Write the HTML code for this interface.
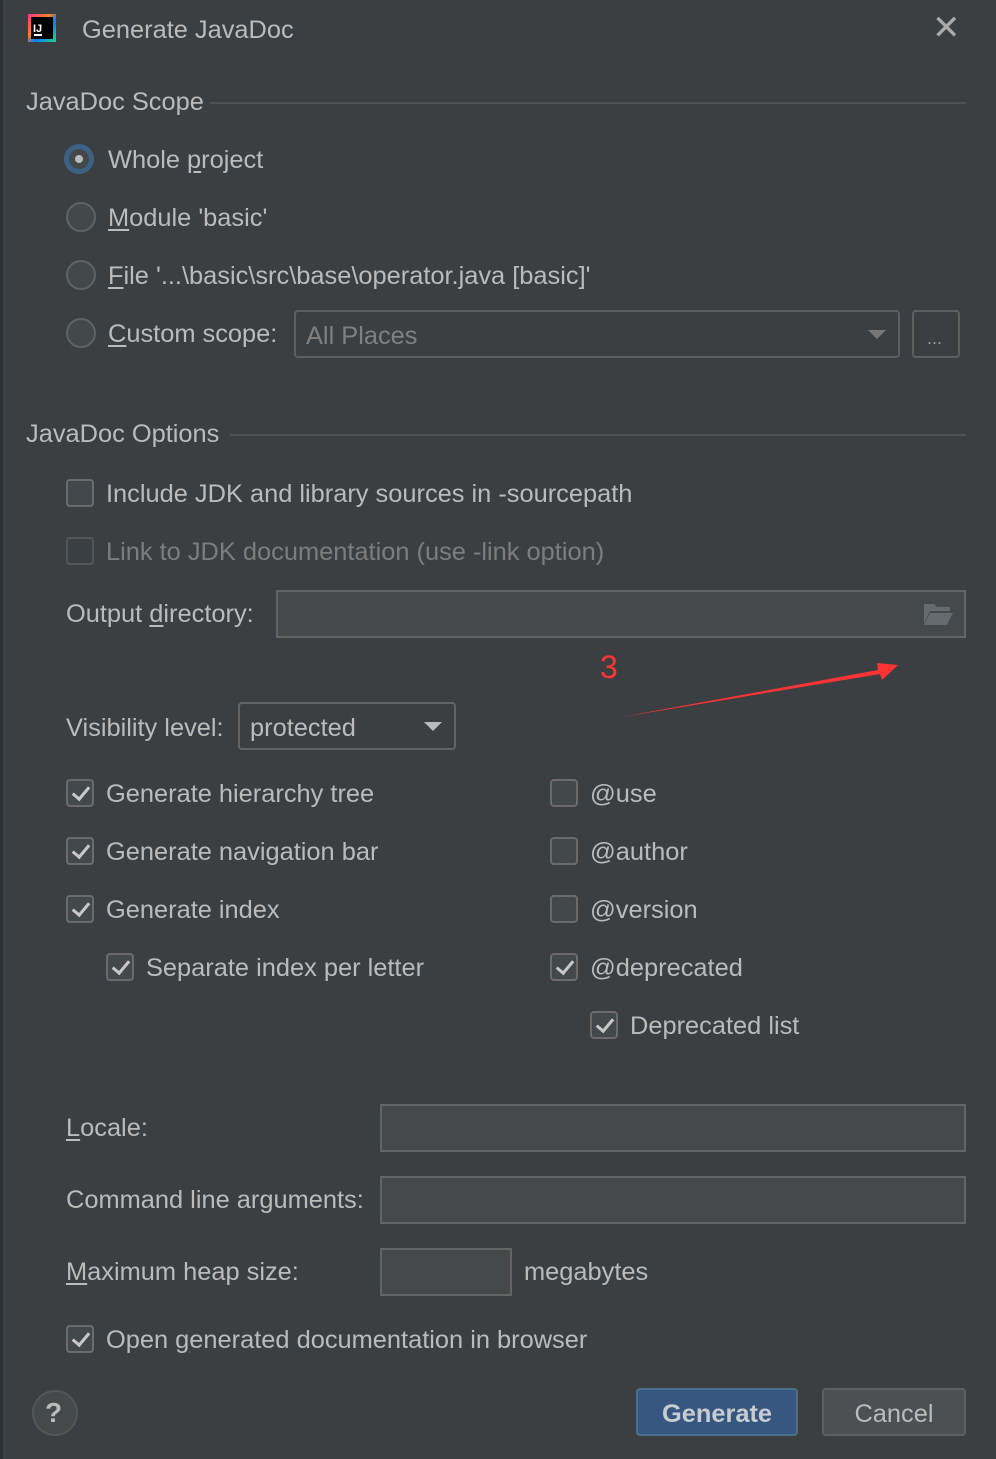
<!DOCTYPE html>
<html><head><meta charset="utf-8"><style>
*{margin:0;padding:0;box-sizing:border-box}
body{width:996px;height:1459px;background:#3c3f41;font-family:"Liberation Sans","DejaVu Sans",sans-serif;color:#bbbbbb;font-size:25.4px;position:relative;overflow:hidden}
.t{position:absolute;line-height:30px;white-space:nowrap;margin-top:1px}
.cb{position:absolute;width:28px;height:28px;border:2px solid #6b6b6b;border-radius:4px;background:#43494a}
.cb.ck::after{content:"";position:absolute;left:8px;top:2px;width:7px;height:14px;border:solid #c8c8c8;border-width:0 3px 3px 0;transform:rotate(40deg)}
.cb.dis{border-color:#555;background:#3c3f41}
.rd{position:absolute;width:30px;height:30px;border:2px solid #5f6364;border-radius:50%;background:#43494a}
.in{position:absolute;border:2px solid #646464;background:#45494a}
.line{position:absolute;height:2px;background:#515151}
u{text-decoration:underline;text-underline-offset:3px}
</style></head><body>
<div style="position:absolute;left:0;top:0;width:3px;height:1459px;background:#2f3133"></div>
<div style="position:absolute;left:28px;top:14px;width:28px;height:28px;background:linear-gradient(135deg,#ff318c,#fc801d 40%,#087cfa 60%,#21d789)"></div>
<div style="position:absolute;left:31px;top:17px;width:22px;height:22px;background:#000"></div>
<div class="t" style="left:33px;top:13px;font-size:11px;font-weight:bold;color:#fff">IJ</div>
<div style="position:absolute;left:34px;top:34px;width:8px;height:2px;background:#fff"></div>
<div class="t" style="left:82px;top:14px">Generate JavaDoc</div>
<div class="t" style="left:932px;top:12px;font-size:34px;color:#aaa">✕</div>

<div class="t" style="left:26px;top:86px">JavaDoc Scope</div>
<div class="line" style="left:210px;top:102px;width:756px"></div>
<div class="rd" style="left:64px;top:144px;border:5px solid #3d6185;background:#43494a"><div style="position:absolute;left:6px;top:6px;width:8px;height:8px;border-radius:50%;background:#bbb"></div></div>
<div class="t" style="left:108px;top:144px">Whole <u>p</u>roject</div>
<div class="rd" style="left:66px;top:202px"></div>
<div class="t" style="left:108px;top:202px"><u>M</u>odule 'basic'</div>
<div class="rd" style="left:66px;top:260px"></div>
<div class="t" style="left:108px;top:260px"><u>F</u>ile '...\basic\src\base\operator.java [basic]'</div>
<div class="rd" style="left:66px;top:318px"></div>
<div class="t" style="left:108px;top:318px"><u>C</u>ustom scope:</div>
<div class="in" style="left:294px;top:310px;width:606px;height:48px;border-radius:4px;background:#3c3f41;border-color:#5e6060"></div>
<div class="t" style="left:306px;top:320px;color:#808080">All Places</div>
<div style="position:absolute;left:868px;top:330px;border-left:9px solid transparent;border-right:9px solid transparent;border-top:9px solid #777"></div>
<div class="in" style="left:912px;top:310px;width:48px;height:48px;border-radius:4px;background:#3c3f41;border-color:#5e6060"></div>
<div class="t" style="left:927px;top:322px;font-size:18px;color:#999">...</div>

<div class="t" style="left:26px;top:418px">JavaDoc Options</div>
<div class="line" style="left:230px;top:434px;width:736px"></div>
<div class="cb" style="left:66px;top:479px"></div>
<div class="t" style="left:106px;top:478px">Include JDK and library sources in -sourcepath</div>
<div class="cb dis" style="left:66px;top:537px"></div>
<div class="t" style="left:106px;top:536px;color:#7d7d7d">Link to JDK documentation (use -link option)</div>
<div class="t" style="left:66px;top:598px">Output <u>d</u>irectory:</div>
<div class="in" style="left:276px;top:590px;width:690px;height:48px"></div>
<svg style="position:absolute;left:922px;top:602px" width="32" height="24" viewBox="0 0 32 24"><path d="M2 2h10l3 3h13v4H8L2 22z" fill="#646c70"/><path d="M8 11h23l-6 12H2z" fill="#646c70"/></svg>
<div class="t" style="left:600px;top:648px;color:#ff3333;font-size:32px;line-height:36px">3</div>
<svg style="position:absolute;left:610px;top:650px" width="300" height="80"><path d="M6 68 L268 20 L267 13 L288 15 L272 30 L270 24 Z" fill="#ff3333"/></svg>

<div class="t" style="left:66px;top:712px">Visibility level:</div>
<div class="in" style="left:238px;top:702px;width:218px;height:48px;border-radius:4px;background:#3c3f41;border-color:#646464"></div>
<div class="t" style="left:250px;top:712px">protected</div>
<div style="position:absolute;left:424px;top:722px;border-left:9px solid transparent;border-right:9px solid transparent;border-top:9px solid #bbb"></div>

<div class="cb ck" style="left:66px;top:779px"></div><div class="t" style="left:106px;top:778px">Generate hierarchy tree</div>
<div class="cb ck" style="left:66px;top:837px"></div><div class="t" style="left:106px;top:836px">Generate navigation bar</div>
<div class="cb ck" style="left:66px;top:895px"></div><div class="t" style="left:106px;top:894px">Generate index</div>
<div class="cb ck" style="left:106px;top:953px"></div><div class="t" style="left:146px;top:952px">Separate index per letter</div>
<div class="cb" style="left:550px;top:779px"></div><div class="t" style="left:590px;top:778px">@use</div>
<div class="cb" style="left:550px;top:837px"></div><div class="t" style="left:590px;top:836px">@author</div>
<div class="cb" style="left:550px;top:895px"></div><div class="t" style="left:590px;top:894px">@version</div>
<div class="cb ck" style="left:550px;top:953px"></div><div class="t" style="left:590px;top:952px">@deprecated</div>
<div class="cb ck" style="left:590px;top:1011px"></div><div class="t" style="left:630px;top:1010px">Deprecated list</div>

<div class="t" style="left:66px;top:1112px"><u>L</u>ocale:</div>
<div class="in" style="left:380px;top:1104px;width:586px;height:48px"></div>
<div class="t" style="left:66px;top:1184px">Command line arguments:</div>
<div class="in" style="left:380px;top:1176px;width:586px;height:48px"></div>
<div class="t" style="left:66px;top:1256px"><u>M</u>aximum heap size:</div>
<div class="in" style="left:380px;top:1248px;width:132px;height:48px"></div>
<div class="t" style="left:524px;top:1256px">megabytes</div>
<div class="cb ck" style="left:66px;top:1325px"></div><div class="t" style="left:106px;top:1324px">Open <u>g</u>enerated documentation in browser</div>

<div style="position:absolute;left:32px;top:1390px;width:46px;height:46px;border-radius:50%;background:#45494a;border:2px solid #555"></div>
<div class="t" style="left:45px;top:1397px;font-size:28px;font-weight:bold;color:#bbb">?</div>
<div style="position:absolute;left:636px;top:1388px;width:162px;height:48px;border-radius:4px;background:#365880;border:2px solid #4c708c"></div>
<div class="t" style="left:636px;top:1398px;width:162px;text-align:center;font-weight:bold;color:#c8ccd0">Generate</div>
<div style="position:absolute;left:822px;top:1388px;width:144px;height:48px;border-radius:4px;background:#4c5052;border:2px solid #5e6060"></div>
<div class="t" style="left:822px;top:1398px;width:144px;text-align:center">Cancel</div>
</body></html>
